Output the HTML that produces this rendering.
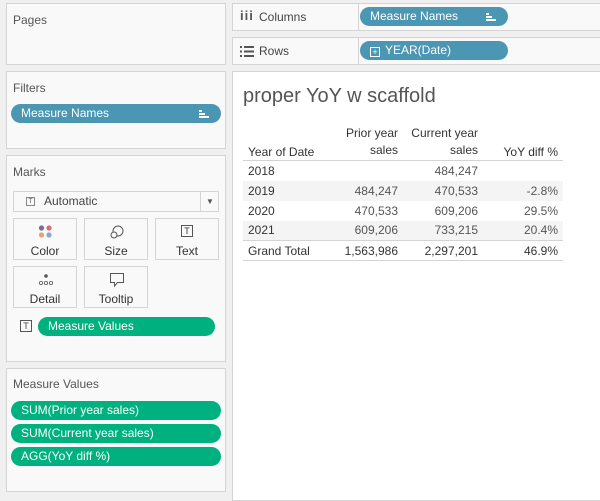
<!DOCTYPE html>
<html><head><style>
*{box-sizing:border-box;margin:0;padding:0}
body{width:600px;height:499px;background:#f0f0f0;position:relative;overflow:hidden;font-family:"Liberation Sans",sans-serif;color:#333}
.a{position:absolute}
.panel{position:absolute;background:#f9f9f9;border:1px solid #d4d4d4}
.ttl{position:absolute;left:6px;font-size:12px;color:#555}
.pill{position:absolute;border-radius:10px;color:#fff;font-size:12px;line-height:19px;padding-left:10px;height:19px}
.blue{background:#4a96b3}
.green{background:#00b180}
.btn{position:absolute;background:#f9f9f9;border:1px solid #d4d4d4;width:64px;height:42px;font-size:12px;color:#333;text-align:center}
.btn span{position:absolute;left:0;right:0;top:25px;line-height:14px}
td{font-size:12px;height:20px;padding:0 1px 0 5px;color:#555;text-align:right}
td:first-child{text-align:left}
.srt{position:absolute;right:12px;top:6px;width:10px;height:8px}
.srt i{display:block;height:1.5px;background:#fff;margin-bottom:1.5px}
</style></head><body>

<div class="panel" style="left:6px;top:3px;width:220px;height:62px"><div class="ttl" style="top:9px">Pages</div></div>

<div class="panel" style="left:6px;top:71px;width:220px;height:78px"><div class="ttl" style="top:9px">Filters</div></div>
<div class="pill blue" style="left:11px;top:104px;width:210px">Measure Names<span class="srt"><i style="width:3px"></i><i style="width:6px"></i><i style="width:10px"></i></span></div>

<div class="panel" style="left:6px;top:155px;width:220px;height:207px"><div class="ttl" style="top:9px">Marks</div></div>
<div class="a" style="left:13px;top:191px;width:206px;height:21px;background:#f9f9f9;border:1px solid #d4d4d4;font-size:12px;line-height:19px;color:#444">
<span style="position:absolute;left:12px;top:5px;width:9px;height:9px;border:1px solid #888;font-size:7px;line-height:7px;text-align:center;color:#666">T</span>
<span style="position:absolute;left:30px">Automatic</span>
<span style="position:absolute;left:186px;top:0;height:19px;border-left:1px solid #d4d4d4;width:19px;text-align:center;font-size:8px;color:#555">&#9660;</span></div>
<div class="btn" style="left:13px;top:218px"><svg class="a" style="left:24px;top:6px" width="16" height="14"><circle cx="3.5" cy="3" r="2.6" fill="#7b6b8f"/><circle cx="11" cy="3" r="2.6" fill="#e06878"/><circle cx="3.5" cy="10" r="2.6" fill="#eea06b"/><circle cx="11" cy="10" r="2.6" fill="#86a9d0"/></svg><span>Color</span></div>
<div class="btn" style="left:84px;top:218px"><svg class="a" style="left:24px;top:5px" width="16" height="16"><circle cx="9" cy="7" r="5" fill="none" stroke="#555"/><circle cx="5" cy="11" r="3" fill="#f9f9f9" stroke="#555"/></svg><span>Size</span></div>
<div class="btn" style="left:155px;top:218px"><div class="a" style="left:25px;top:6px;width:12px;height:12px;border:1px solid #555;font-size:9px;line-height:10px;text-align:center">T</div><span>Text</span></div>
<div class="btn" style="left:13px;top:266px"><svg class="a" style="left:24px;top:6px" width="16" height="14"><circle cx="8" cy="3" r="1.8" fill="#555"/><circle cx="3" cy="10" r="1.6" fill="none" stroke="#555" stroke-width=".8"/><circle cx="8" cy="10" r="1.6" fill="none" stroke="#555" stroke-width=".8"/><circle cx="13" cy="10" r="1.6" fill="none" stroke="#555" stroke-width=".8"/></svg><span>Detail</span></div>
<div class="btn" style="left:84px;top:266px"><svg class="a" style="left:24px;top:5px" width="16" height="16"><path d="M1.5 1.5h13v9h-6l-3 3.5v-3.5h-4z" fill="none" stroke="#555"/></svg><span>Tooltip</span></div>
<div class="a" style="left:20px;top:320px;width:12px;height:12px;border:1px solid #555;font-size:9px;line-height:10px;text-align:center;color:#444">T</div>
<div class="pill green" style="left:38px;top:317px;width:177px">Measure Values</div>

<div class="panel" style="left:6px;top:368px;width:220px;height:124px"><div class="ttl" style="top:8px">Measure Values</div></div>
<div class="pill green" style="left:11px;top:401px;width:210px">SUM(Prior year sales)</div>
<div class="pill green" style="left:11px;top:424px;width:210px">SUM(Current year sales)</div>
<div class="pill green" style="left:11px;top:447px;width:210px">AGG(YoY diff %)</div>

<div class="panel" style="left:232px;top:3px;width:370px;height:28px"><div class="a" style="left:125px;top:0;height:26px;border-left:1px solid #d4d4d4"></div>
<div class="a" style="left:7px;top:4px;font-size:13px;font-weight:bold;color:#555;letter-spacing:1px">iii</div><div class="a" style="left:26px;top:6px;font-size:12px;color:#444">Columns</div></div>
<div class="pill blue" style="left:360px;top:7px;width:148px">Measure Names<span class="srt"><i style="width:3px"></i><i style="width:6px"></i><i style="width:10px"></i></span></div>
<div class="panel" style="left:232px;top:37px;width:370px;height:28px"><div class="a" style="left:125px;top:0;height:26px;border-left:1px solid #d4d4d4"></div>
<svg class="a" style="left:7px;top:8px" width="14" height="11"><g fill="#555"><rect x="0" y="0" width="2" height="2"/><rect x="0" y="4.5" width="2" height="2"/><rect x="0" y="9" width="2" height="2"/><rect x="4" y="0" width="10" height="2"/><rect x="4" y="4.5" width="10" height="2"/><rect x="4" y="9" width="10" height="2"/></g></svg><div class="a" style="left:26px;top:6px;font-size:12px;color:#444">Rows</div></div>
<div class="pill blue" style="left:360px;top:41px;width:148px"><span style="display:inline-block;width:10px;height:10px;border:1px solid #fff;font-size:9px;line-height:8px;text-align:center;vertical-align:-1px;margin-right:5px">+</span>YEAR(Date)</div>

<div class="a" style="left:232px;top:71px;width:370px;height:430px;background:#fff;border:1px solid #d4d4d4"></div>
<div class="a" style="left:243px;top:85px;font-size:20px;color:#555">proper YoY w scaffold</div>
<table class="a" style="left:243px;top:125px;width:320px;border-collapse:collapse">
<tr><td style="height:34px;vertical-align:bottom;width:88px;color:#333;padding-bottom:1px">Year of Date</td><td style="vertical-align:bottom;width:68px;line-height:17px;color:#333;padding-bottom:1px">Prior year<br>sales</td><td style="vertical-align:bottom;width:80px;line-height:17px;color:#333;padding-bottom:1px">Current year<br>sales</td><td style="vertical-align:bottom;color:#333;padding-bottom:1px;padding-right:5px">YoY diff %</td></tr>
<tr style="border-top:1px solid #d4d4d4"><td style="color:#333">2018</td><td></td><td>484,247</td><td></td></tr>
<tr style="background:#f4f4f4"><td style="color:#333">2019</td><td>484,247</td><td>470,533</td><td style="padding-right:5px">-2.8%</td></tr>
<tr><td style="color:#333">2020</td><td>470,533</td><td>609,206</td><td style="padding-right:5px">29.5%</td></tr>
<tr style="background:#f4f4f4"><td style="color:#333">2021</td><td>609,206</td><td>733,215</td><td style="padding-right:5px">20.4%</td></tr>
<tr style="border-top:1px solid #d4d4d4;border-bottom:1px solid #d4d4d4"><td style="color:#333">Grand Total</td><td style="color:#333">1,563,986</td><td style="color:#333">2,297,201</td><td style="color:#333;padding-right:5px">46.9%</td></tr>
</table>
</body></html>
